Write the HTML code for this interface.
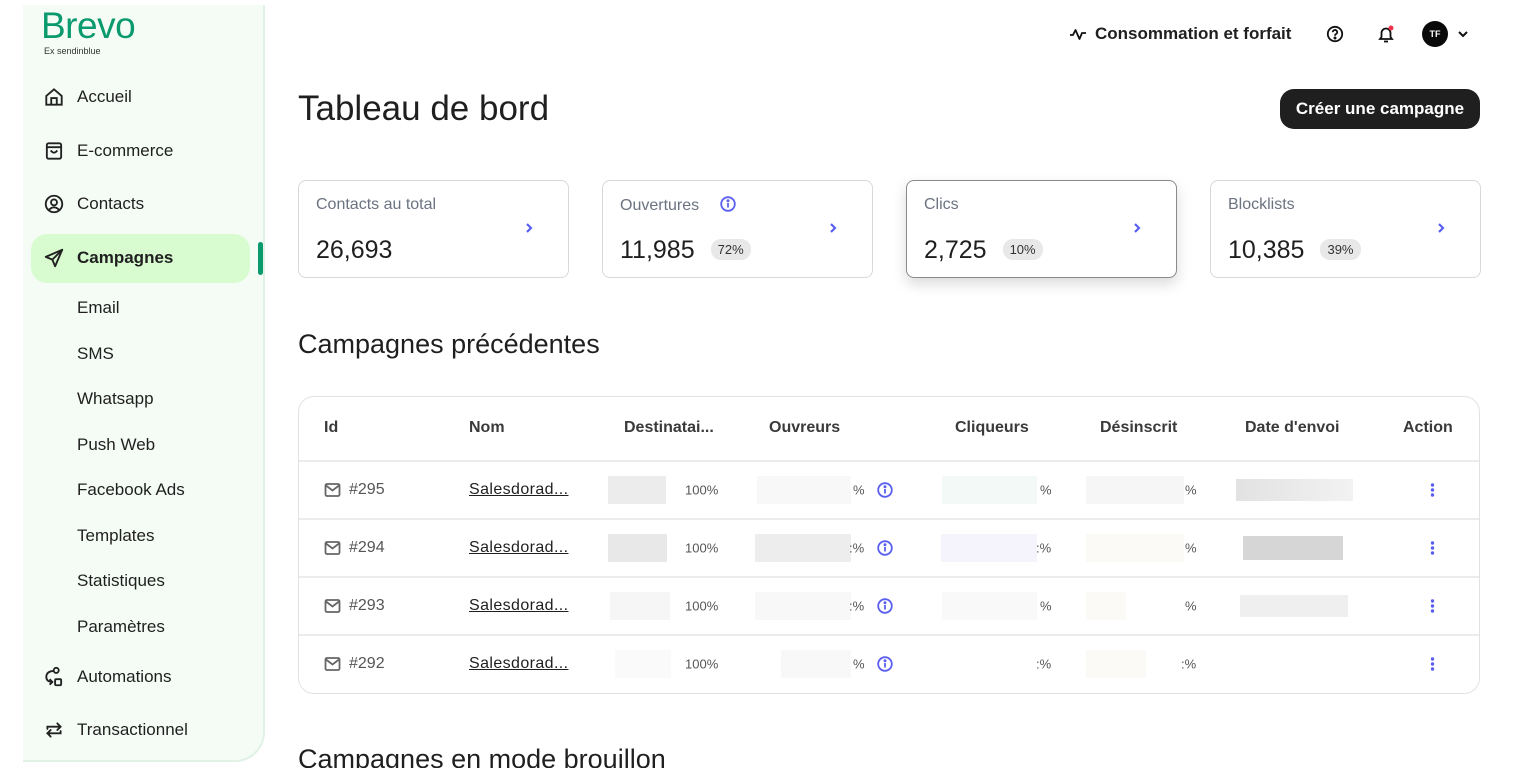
<!DOCTYPE html>
<html><head><meta charset="utf-8"><style>
*{margin:0;padding:0;box-sizing:border-box}
html,body{width:1536px;height:768px;overflow:hidden}
body{background:#fff;font-family:"Liberation Sans",sans-serif;color:#1f1f1f;position:relative}
.a{position:absolute}
.side{left:23px;top:5px;width:242px;height:757px;background:#f5fcf6;border-right:2px solid #e0f2e5;border-bottom:2px solid #e0f2e5;border-bottom-right-radius:30px}
.nav{position:absolute;left:77px;font-size:17px;color:#1f1f1f;transform:translateY(-50%);white-space:nowrap}
.ic{position:absolute;left:43px;transform:translateY(-50%)}
.card{position:absolute;top:180px;width:271px;height:98px;border:1px solid #d6d8dc;border-radius:8px;background:#fff}
.card .l{position:absolute;left:17px;top:15px;font-size:16px;color:#6b7280}
.card .v{position:absolute;left:17px;top:55px;font-size:25px;color:#1f1f1f}
.card .b{display:inline-block;margin-left:16px;background:#e8e8e8;border-radius:10px;font-size:13px;padding:3px 7px;vertical-align:4px;color:#333}
.card .c{position:absolute;left:224px;top:40px}
.th{position:absolute;top:428px;transform:translateY(-50%);font-size:16px;font-weight:bold;color:#3a3a3a}
.row{position:absolute;left:299px;width:1180px;height:58px;border-top:2px solid #ececec}
.cell{position:absolute;top:50%;transform:translateY(-50%);font-size:16px;white-space:nowrap}
.blur{position:absolute;top:50%;transform:translateY(-50%);height:28px}
.nm{letter-spacing:0.4px;text-decoration:underline}
</style></head><body>
<div class="a side"></div>
<div class="a" style="left:41px;top:5px;font-size:37px;color:#0b9a6d;letter-spacing:-0.5px">Brevo</div>
<div class="a" style="left:44px;top:46px;font-size:9px;color:#333">Ex sendinblue</div>

<svg class="ic" style="top:97px" width="22" height="22" viewBox="0 0 20 20" fill="none" stroke="#222" stroke-width="1.7"><path d="M3 9l7-6 7 6v8H3z"/><path d="M7.5 17v-6h5v6"/></svg>
<div class="nav" style="top:97px">Accueil</div>
<svg class="ic" style="top:151px" width="22" height="22" viewBox="0 0 20 20" fill="none" stroke="#222" stroke-width="1.7"><rect x="3.5" y="3" width="13" height="14" rx="1.5"/><path d="M3.5 6.5h13M7 9.5q3 4 6 0"/></svg>
<div class="nav" style="top:151px">E-commerce</div>
<svg class="ic" style="top:204px" width="22" height="22" viewBox="0 0 20 20" fill="none" stroke="#222" stroke-width="1.7"><circle cx="10" cy="10" r="7.5"/><circle cx="10" cy="8.5" r="2.7"/><path d="M5.2 15.5q4.8-5 9.6 0"/></svg>
<div class="nav" style="top:204px">Contacts</div>
<div class="a" style="left:31px;top:234px;width:219px;height:49px;background:#d8fcd0;border-radius:16px"></div>
<div class="a" style="left:258px;top:242px;width:5px;height:33px;background:#0b9a6d;border-radius:3px"></div>
<svg class="ic" style="top:258px" width="22" height="22" viewBox="0 0 20 20" fill="none" stroke="#222" stroke-width="1.7" stroke-linejoin="round"><path d="M17.5 2.5L2.5 9l6 2.5 2.5 6z"/><path d="M8.5 11.5l9-9"/></svg>
<div class="nav" style="top:258px;font-weight:bold">Campagnes</div>
<div class="nav" style="top:308px">Email</div>
<div class="nav" style="top:354px">SMS</div>
<div class="nav" style="top:399px">Whatsapp</div>
<div class="nav" style="top:445px">Push Web</div>
<div class="nav" style="top:490px">Facebook Ads</div>
<div class="nav" style="top:536px">Templates</div>
<div class="nav" style="top:581px">Statistiques</div>
<div class="nav" style="top:627px">Paramètres</div>
<svg class="ic" style="top:677px" width="22" height="22" viewBox="0 0 20 20" fill="none" stroke="#222" stroke-width="1.7"><circle cx="12" cy="4" r="2.3"/><rect x="11" y="12" width="5.5" height="5.5" rx="1"/><path d="M9.5 4.5Q3 5 3 10q0 4 5 4.5M6 12l2.5 2.5L6 17"/></svg>
<div class="nav" style="top:677px">Automations</div>
<svg class="ic" style="top:730px" width="22" height="22" viewBox="0 0 20 20" fill="none" stroke="#222" stroke-width="1.7" stroke-linecap="round"><path d="M4 9V7h12M13 4l3 3-3 3M16 11v2H4M7 16l-3-3 3-3"/></svg>
<div class="nav" style="top:730px">Transactionnel</div>

<svg class="a" style="left:1069px;top:25px" width="18" height="18" viewBox="0 0 18 18" fill="none" stroke="#111" stroke-width="1.8" stroke-linejoin="round"><path d="M1 10h3l2.5-5 4 9 2.5-6h4"/></svg>
<div class="a" style="left:1095px;top:24px;font-size:17px;font-weight:bold">Consommation et forfait</div>
<svg class="a" style="left:1326px;top:25px" width="18" height="18" viewBox="0 0 18 18" fill="none" stroke="#111" stroke-width="1.8"><circle cx="9" cy="9" r="7.2"/><path d="M6.8 7.2a2.2 2.2 0 1 1 3 2c-.7.3-.8.8-.8 1.5"/><circle cx="9" cy="13" r=".6" fill="#111"/></svg>
<svg class="a" style="left:1376px;top:24px" width="20" height="20" viewBox="0 0 20 20" fill="none" stroke="#111" stroke-width="1.8"><path d="M4 15h12l-1.5-2V9a4.5 4.5 0 0 0-9 0v4z"/><path d="M8 17.5h4"/><circle cx="15" cy="4" r="2.5" fill="#f0314b" stroke="none"/></svg>
<div class="a" style="left:1422px;top:21px;width:26px;height:26px;border-radius:50%;background:#0a0a0a;color:#fff;font-size:9px;font-weight:bold;text-align:center;line-height:26px">TF</div>
<svg class="a" style="left:1457px;top:28px" width="12" height="12" viewBox="0 0 12 12" fill="none" stroke="#111" stroke-width="2"><path d="M2 4l4 4 4-4"/></svg>

<div class="a" style="left:298px;top:89px;font-size:35px;color:#1f1f1f">Tableau de bord</div>
<div class="a" style="left:1280px;top:89px;width:200px;height:40px;background:#1f1f1f;border-radius:14px;color:#fff;font-size:17px;font-weight:bold;text-align:center;line-height:40px">Créer une campagne</div>

<div class="card" style="left:298px"><div class="l">Contacts au total</div><div class="v">26,693</div><svg class="c" width="12" height="14" viewBox="0 0 12 14" fill="none" stroke="#5b5ff0" stroke-width="2.2"><path d="M4 3l4 4-4 4"/></svg></div>
<div class="card" style="left:602px"><div class="l">Ouvertures <svg style="margin-left:16px;vertical-align:-2px" width="16" height="16" viewBox="0 0 16 16" fill="none" stroke="#5b5ff0" stroke-width="1.8"><circle cx="8" cy="8" r="6.8"/><path d="M8 7v4.5"/><circle cx="8" cy="4.7" r=".6" fill="#5b5ff0"/></svg></div><div class="v">11,985<span class="b">72%</span></div><svg class="c" width="12" height="14" viewBox="0 0 12 14" fill="none" stroke="#5b5ff0" stroke-width="2.2"><path d="M4 3l4 4-4 4"/></svg></div>
<div class="card" style="left:906px;border-color:#8a8a8a;box-shadow:0 6px 14px rgba(0,0,0,.15)"><div class="l">Clics</div><div class="v">2,725<span class="b">10%</span></div><svg class="c" width="12" height="14" viewBox="0 0 12 14" fill="none" stroke="#5b5ff0" stroke-width="2.2"><path d="M4 3l4 4-4 4"/></svg></div>
<div class="card" style="left:1210px"><div class="l">Blocklists</div><div class="v">10,385<span class="b">39%</span></div><svg class="c" width="12" height="14" viewBox="0 0 12 14" fill="none" stroke="#5b5ff0" stroke-width="2.2"><path d="M4 3l4 4-4 4"/></svg></div>

<div class="a" style="left:298px;top:329px;font-size:27px">Campagnes précédentes</div>

<div class="a" style="left:298px;top:396px;width:1182px;height:298px;border:1px solid #e2e2e2;border-radius:16px"></div>
<div class="th" style="left:324px">Id</div>
<div class="th" style="left:469px">Nom</div>
<div class="th" style="left:624px">Destinatai...</div>
<div class="th" style="left:769px">Ouvreurs</div>
<div class="th" style="left:955px">Cliqueurs</div>
<div class="th" style="left:1100px">Désinscrit</div>
<div class="th" style="left:1245px">Date d'envoi</div>
<div class="th" style="left:1403px">Action</div>

<div class="row" style="top:460px">
 <svg class="cell" style="left:25px" width="17" height="15" viewBox="0 0 17 15" fill="none" stroke="#666" stroke-width="1.8"><rect x="1.5" y="1.5" width="14" height="12" rx="1.5"/><path d="M2 3l6.5 5 6.5-5"/></svg>
 <div class="cell" style="left:50px;color:#555">#295</div>
 <div class="cell nm" style="left:170px">Salesdorad...</div>
 <div class="blur" style="left:309px;width:58px;background:#ececec"></div>
 <div class="cell" style="left:386px;font-size:13px;color:#555">100%</div>
 <div class="blur" style="left:458px;width:94px;background:#f8f8f8"></div>
 <div class="cell" style="left:554px;font-size:13px;color:#555">%</div>
 <svg class="cell" style="left:578px" width="16" height="16" viewBox="0 0 16 16" fill="none" stroke="#5b5ff0" stroke-width="1.8"><circle cx="8" cy="8" r="6.8"/><path d="M8 7v4.5"/><circle cx="8" cy="4.7" r=".6" fill="#5b5ff0"/></svg>
 <div class="blur" style="left:643px;width:95px;background:#f3f9f6"></div>
 <div class="cell" style="left:741px;font-size:13px;color:#555">%</div>
 <div class="blur" style="left:787px;width:98px;background:#f6f6f6"></div>
 <div class="cell" style="left:886px;font-size:13px;color:#555">%</div>
 <div class="blur" style="left:937px;width:117px;height:22px;background:linear-gradient(90deg,#e2e2e2,#f2f2f2)"></div>
 <svg class="cell" style="left:1131px" width="5" height="16" viewBox="0 0 5 16" fill="#5b5ff0"><circle cx="2.5" cy="3" r="1.7"/><circle cx="2.5" cy="8" r="1.7"/><circle cx="2.5" cy="13" r="1.7"/></svg>
</div>
<div class="row" style="top:518px">
 <svg class="cell" style="left:25px" width="17" height="15" viewBox="0 0 17 15" fill="none" stroke="#666" stroke-width="1.8"><rect x="1.5" y="1.5" width="14" height="12" rx="1.5"/><path d="M2 3l6.5 5 6.5-5"/></svg>
 <div class="cell" style="left:50px;color:#555">#294</div>
 <div class="cell nm" style="left:170px">Salesdorad...</div>
 <div class="blur" style="left:309px;width:59px;background:#e8e8e8"></div>
 <div class="cell" style="left:386px;font-size:13px;color:#555">100%</div>
 <div class="blur" style="left:456px;width:96px;background:#ededed"></div>
 <div class="cell" style="left:550px;font-size:13px;color:#555">:%</div>
 <svg class="cell" style="left:578px" width="16" height="16" viewBox="0 0 16 16" fill="none" stroke="#5b5ff0" stroke-width="1.8"><circle cx="8" cy="8" r="6.8"/><path d="M8 7v4.5"/><circle cx="8" cy="4.7" r=".6" fill="#5b5ff0"/></svg>
 <div class="blur" style="left:642px;width:96px;background:#f5f4fc"></div>
 <div class="cell" style="left:737px;font-size:13px;color:#555">:%</div>
 <div class="blur" style="left:787px;width:98px;background:#fbfaf6"></div>
 <div class="cell" style="left:886px;font-size:13px;color:#555">%</div>
 <div class="blur" style="left:944px;width:100px;height:24px;background:#d6d6d6"></div>
 <svg class="cell" style="left:1131px" width="5" height="16" viewBox="0 0 5 16" fill="#5b5ff0"><circle cx="2.5" cy="3" r="1.7"/><circle cx="2.5" cy="8" r="1.7"/><circle cx="2.5" cy="13" r="1.7"/></svg>
</div>
<div class="row" style="top:576px">
 <svg class="cell" style="left:25px" width="17" height="15" viewBox="0 0 17 15" fill="none" stroke="#666" stroke-width="1.8"><rect x="1.5" y="1.5" width="14" height="12" rx="1.5"/><path d="M2 3l6.5 5 6.5-5"/></svg>
 <div class="cell" style="left:50px;color:#555">#293</div>
 <div class="cell nm" style="left:170px">Salesdorad...</div>
 <div class="blur" style="left:311px;width:60px;background:#f6f6f6"></div>
 <div class="cell" style="left:386px;font-size:13px;color:#555">100%</div>
 <div class="blur" style="left:456px;width:96px;background:#f8f8f8"></div>
 <div class="cell" style="left:550px;font-size:13px;color:#555">:%</div>
 <svg class="cell" style="left:578px" width="16" height="16" viewBox="0 0 16 16" fill="none" stroke="#5b5ff0" stroke-width="1.8"><circle cx="8" cy="8" r="6.8"/><path d="M8 7v4.5"/><circle cx="8" cy="4.7" r=".6" fill="#5b5ff0"/></svg>
 <div class="blur" style="left:643px;width:95px;background:#f9f9f9"></div>
 <div class="cell" style="left:741px;font-size:13px;color:#555">%</div>
 <div class="blur" style="left:787px;width:40px;background:#fbfaf6"></div>
 <div class="cell" style="left:886px;font-size:13px;color:#555">%</div>
 <div class="blur" style="left:941px;width:108px;height:22px;background:#efefef"></div>
 <svg class="cell" style="left:1131px" width="5" height="16" viewBox="0 0 5 16" fill="#5b5ff0"><circle cx="2.5" cy="3" r="1.7"/><circle cx="2.5" cy="8" r="1.7"/><circle cx="2.5" cy="13" r="1.7"/></svg>
</div>
<div class="row" style="top:634px">
 <svg class="cell" style="left:25px" width="17" height="15" viewBox="0 0 17 15" fill="none" stroke="#666" stroke-width="1.8"><rect x="1.5" y="1.5" width="14" height="12" rx="1.5"/><path d="M2 3l6.5 5 6.5-5"/></svg>
 <div class="cell" style="left:50px;color:#555">#292</div>
 <div class="cell nm" style="left:170px">Salesdorad...</div>
 <div class="blur" style="left:316px;width:56px;background:#fafafa"></div>
 <div class="cell" style="left:386px;font-size:13px;color:#555">100%</div>
 <div class="blur" style="left:482px;width:70px;background:#f8f8f8"></div>
 <div class="cell" style="left:554px;font-size:13px;color:#555">%</div>
 <svg class="cell" style="left:578px" width="16" height="16" viewBox="0 0 16 16" fill="none" stroke="#5b5ff0" stroke-width="1.8"><circle cx="8" cy="8" r="6.8"/><path d="M8 7v4.5"/><circle cx="8" cy="4.7" r=".6" fill="#5b5ff0"/></svg>
 <div class="cell" style="left:737px;font-size:13px;color:#555">:%</div>
 <div class="blur" style="left:787px;width:60px;background:#fbfaf6"></div>
 <div class="cell" style="left:882px;font-size:13px;color:#555">:%</div>
 <svg class="cell" style="left:1131px" width="5" height="16" viewBox="0 0 5 16" fill="#5b5ff0"><circle cx="2.5" cy="3" r="1.7"/><circle cx="2.5" cy="8" r="1.7"/><circle cx="2.5" cy="13" r="1.7"/></svg>
</div>

<div class="a" style="left:298px;top:744px;font-size:27px">Campagnes en mode brouillon</div>
</body></html>
